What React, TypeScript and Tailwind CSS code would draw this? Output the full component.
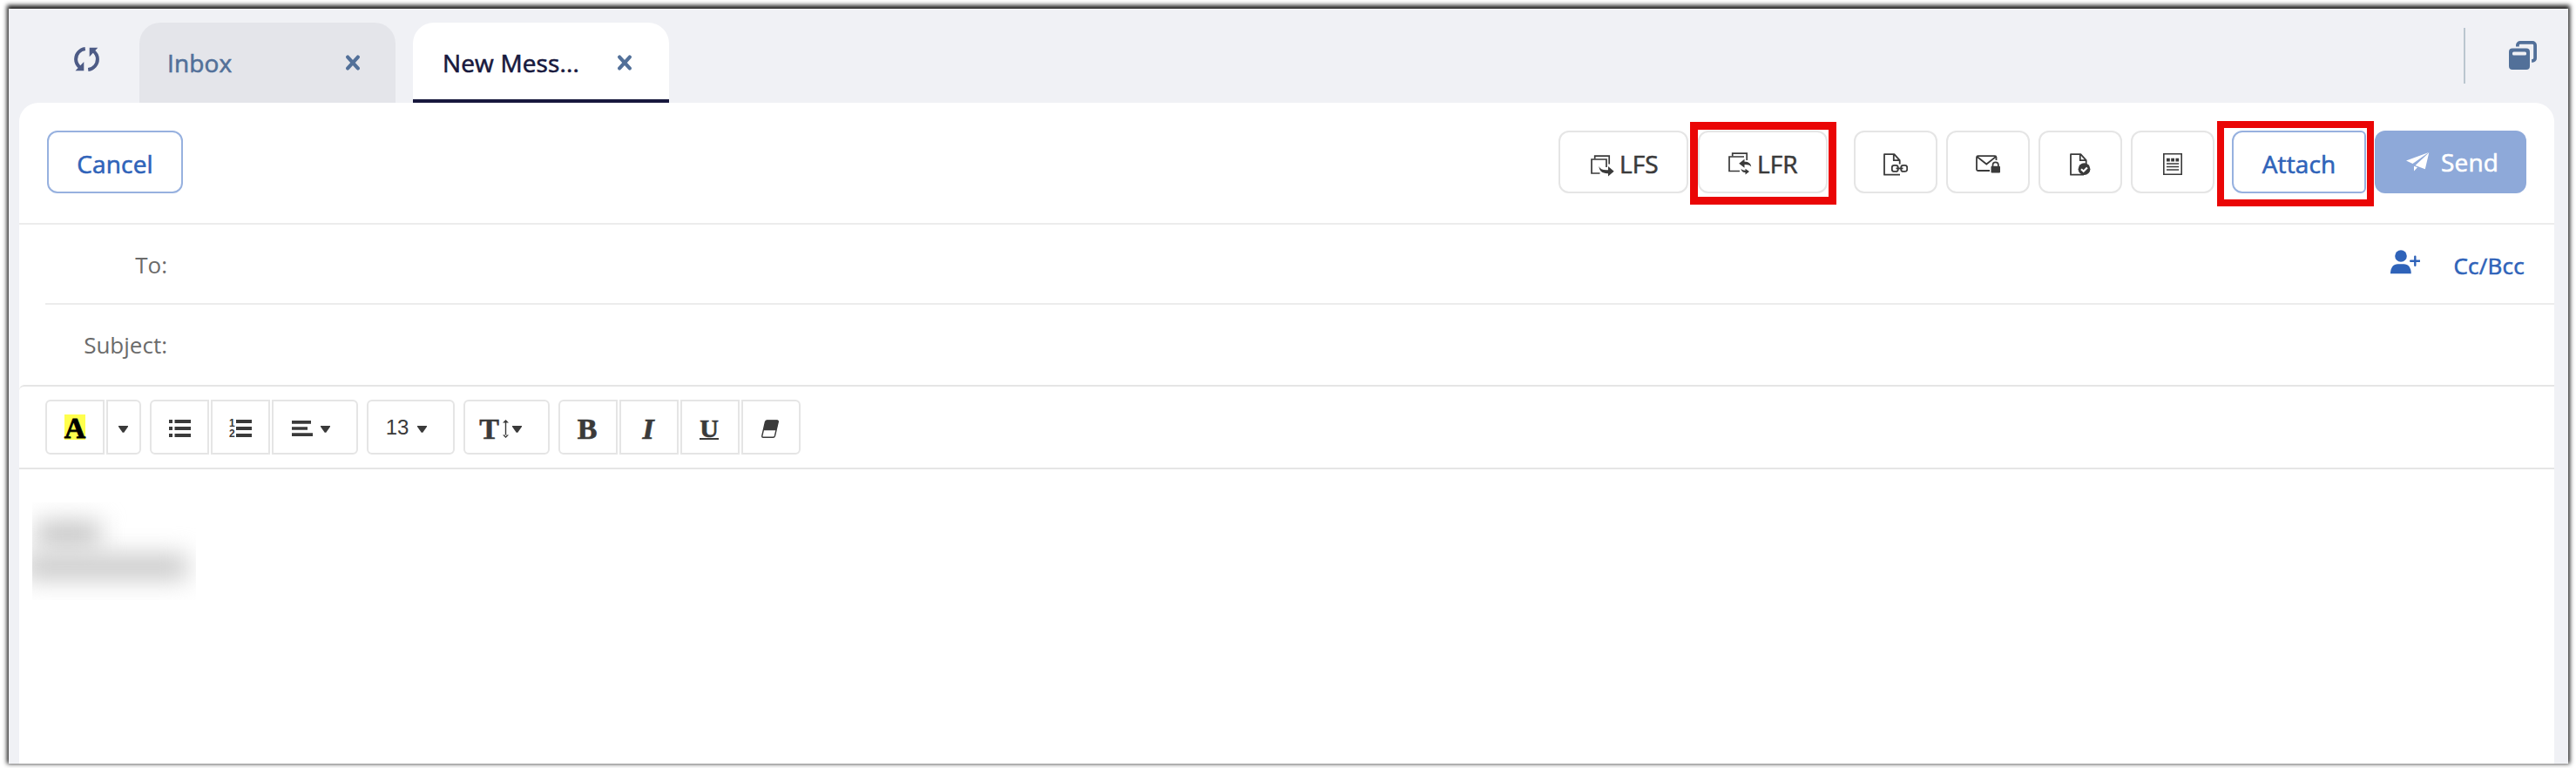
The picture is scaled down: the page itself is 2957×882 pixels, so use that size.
import React from "react";

const iconBtn =
  "flex h-[72px] w-24 shrink-0 items-center justify-center rounded-xl border-2 border-[#e5e5e5] bg-white";
const tool = "flex h-[63px] shrink-0 items-center justify-center border-2 border-[#e5e5e5] bg-white pt-[3px]";
const medium = "text-[28px] font-medium tracking-[0.15px] [-webkit-text-stroke:0.6px_currentColor]";

function Close() {
  return (
    <svg width="16" height="18" viewBox="0 0 16 18" fill="none" stroke="#527099" strokeWidth="4.2" strokeLinecap="round">
      <path d="M2.2 2.6 13.8 15.4M13.8 2.6 2.2 15.4" />
    </svg>
  );
}

function Refresh() {
  return (
    <svg width="29" height="28" viewBox="0 0 29 28">
      <g fill="none" stroke="#4d5b86" strokeWidth="4">
        <path d="M12.8 2C6.600 2.800 2.100 8 2.100 14c0 4 1.800 7.200 5 9.500" />
        <path d="M16.200 26C22.400 25.200 26.900 20 26.900 14c0-4-1.800-7.200-5-9.500" />
      </g>
      <path d="M1.500 27.300h9.800V17z M27.300 .8H17.700V11.200z" fill="#4d5b86" />
    </svg>
  );
}

function Windows() {
  return (
    <svg width="32" height="33" viewBox="0 0 32 33">
      <path d="M9.900 6.500V5a3.100 3.100 0 0 1 3.100-3.100h14A3.100 3.100 0 0 1 30.100 5v14.800a3 3 0 0 1-3 3h-1" fill="none" stroke="#527099" strokeWidth="3.800" />
      <path fillRule="evenodd" fill="#527099" d="M4 8.500h16a4 4 0 0 1 4 4V29a4 4 0 0 1-4 4H4a4 4 0 0 1-4-4V12.500a4 4 0 0 1 4-4zM5.500 12.500a1.500 1.500 0 0 0-1.500 1.500v1a1.500 1.500 0 0 0 1.500 1.500h13a1.500 1.500 0 0 0 1.500-1.500v-1a1.500 1.500 0 0 0-1.500-1.500z" />
    </svg>
  );
}

function ShareIcon() {
  return (
    <svg width="27" height="26" viewBox="0 0 27 26">
      <g fill="none" stroke="#3a3a3a" strokeWidth="1.700">
        <path d="M4.700 4.500V1.200h16.500v9.300" />
        <path d="M18 14V5H1v16h9.500" />
      </g>
      <path d="M9.500 13c1 3 4.500 4.700 10.500 4.200V13l6.700 5.700L20 24.600v-3.400C13.500 21.500 9.500 18 9.500 13z" fill="#3a3a3a" />
    </svg>
  );
}

function ReturnIcon() {
  return (
    <svg width="27" height="26" viewBox="0 0 27 26">
      <g fill="none" stroke="#3a3a3a" strokeWidth="1.700">
        <path d="M4.700 4.500V1.200h16.500V9" />
        <path d="M18 5H1v16.500h12" />
      </g>
      <path d="M12.200 12.800 18.500 7.800v3c4.500 0 7.500 2 7.700 5.700-2-2-4-2.600-7.700-2.400v3.700z M14.500 18.800c1.200 1.400 2.800 2 5 1.900v-2l4.500 3.300-4.500 3.500v-2.400c-2.700.2-4.600-1.500-5-4.300z" fill="#3a3a3a" />
    </svg>
  );
}

function FileLink() {
  return (
    <svg width="28" height="26" viewBox="0 0 28 26" fill="none" stroke="#3a3a3a" strokeWidth="1.800" strokeLinejoin="round">
      <path d="M18.700 12.500V8.200L12.400 1.200H1v23.500h18M11.800 1.200v7h7" />
      <rect x="9.800" y="13.900" width="7" height="7" rx="2.500" />
      <rect x="20.200" y="13.900" width="7" height="7" rx="2.500" />
      <path d="M14.500 17.400h8" />
    </svg>
  );
}

function MailLock() {
  return (
    <svg width="28" height="22" viewBox="0 0 28 22">
      <path d="M23.500 6V2.500A1.500 1.500 0 0 0 22 1.200H2.500A1.500 1.500 0 0 0 1 2.500v14A1.500 1.500 0 0 0 2.500 18H16M1.500 2l10.800 8.500L23 2" fill="none" stroke="#3a3a3a" strokeWidth="1.800" />
      <rect x="17.500" y="12.800" width="10.500" height="7.700" rx="1" fill="#3a3a3a" />
      <path d="M19.500 13.500v-2a3.200 3.200 0 0 1 6.400 0v2" fill="none" stroke="#3a3a3a" strokeWidth="1.700" />
    </svg>
  );
}

function FileCheck() {
  return (
    <svg width="24" height="26" viewBox="0 0 24 26">
      <path d="M18.700 13V8.200L12.400 1.200H1v23.500h15M11.800 1.200v7h7" fill="none" stroke="#3a3a3a" strokeWidth="1.800" strokeLinejoin="round" />
      <circle cx="16.500" cy="18.200" r="6.900" fill="#3a3a3a" />
      <path d="m13 18.200 2.700 2.600 4.200-4.400" fill="none" stroke="#fff" strokeWidth="2.200" />
    </svg>
  );
}

function FormIcon() {
  return (
    <svg width="22" height="25" viewBox="0 0 22 25">
      <path d="M.8.800h20.400v23.400H.8z" fill="none" stroke="#3a3a3a" strokeWidth="1.600" />
      <path d="M4 5.800h3.800v3.700H4zM9.200 5.800H13v3.700H9.200zM14.400 5.800h3.800v3.700h-3.800z" fill="#3a3a3a" />
      <path d="M4 12h14.200M4 15.500h14.200M4 19h14.200" stroke="#3a3a3a" strokeWidth="1.700" />
    </svg>
  );
}

function Plane() {
  return (
    <svg width="27" height="22" viewBox="0 0 27 22" fill="#fff">
      <path d="M26 0 0 9.600 7.500 13zM26.300 .2 10.500 15l11.300 4.300zM9 15.800v5.700l4-4.200z" />
    </svg>
  );
}

function PersonAdd() {
  return (
    <svg width="34" height="28" viewBox="0 0 34 28" fill="#2f63b9">
      <circle cx="12" cy="7" r="6.800" />
      <path d="M0 27.200c0-7 3.500-10.900 8.500-10.900h6.800c5 0 8.500 3.900 8.500 10.900z" />
      <path d="M28.300 7.600v10.200M23.200 12.700h10.200" stroke="#2f63b9" strokeWidth="2.400" strokeLinecap="round" />
    </svg>
  );
}

function Caret() {
  return (
    <svg className="mt-0.5 shrink-0" width="11" height="8" viewBox="0 0 11 8" fill="#3a3a3a">
      <path d="M0 0h11v1L6.300 7.700H4.700L0 1z" />
    </svg>
  );
}

function Bullets() {
  return (
    <svg width="25" height="20" viewBox="0 0 25 20" fill="#3a3a3a">
      <path d="M0 0h4v4H0zM6.500 0H25v4H6.500zM0 8h4v4H0zM6.500 8H25v4H6.500zM0 16h4v4H0zM6.500 16H25v4H6.500z" />
    </svg>
  );
}

function Numbers() {
  return (
    <span className="flex items-center gap-0.5">
      <span className="flex w-1.5 flex-col font-['Liberation_Sans'] text-[12px] leading-[12px] font-bold">
        <span>1</span>
        <span>2</span>
      </span>
      <svg width="18" height="20" viewBox="0 0 18 20" fill="#3a3a3a">
        <path d="M0 0h18v4H0zM0 8h18v4H0zM0 16h18v4H0z" />
      </svg>
    </span>
  );
}

function Align() {
  return (
    <svg width="24" height="18" viewBox="0 0 24 18" fill="#3a3a3a">
      <path d="M0 0h22v3.800H0zM0 7.200h18v3.600H0zM0 14.200h24V18H0z" />
    </svg>
  );
}

function UpDown() {
  return (
    <svg className="shrink-0" width="7" height="21" viewBox="0 0 7 21" fill="#3a3a3a">
      <path d="M3.500 0 7 3.500H0zM3.500 21 7 17.500H0zM2.800 2h1.400v17H2.800z" />
    </svg>
  );
}

function Eraser() {
  return (
    <svg width="20" height="21" viewBox="0 0 20 21">
      <path d="M6.500 1h11.500q1.500 0 1.200 1.500L15.500 18.500Q15 20.200 13.500 20.200H2Q.4 20.200.8 18.500L4.500 2.500Q5 1 6.500 1z" fill="#fff" stroke="#3a3a3a" strokeWidth="1.400" />
      <path d="M6.500 .5h11.500q1.800 0 1.400 2L17 12.300H2.400L4.500 2.500Q5 .5 6.500 .5z" fill="#3a3a3a" />
    </svg>
  );
}

export default function App() {
  return (
    <div className="h-[882px] w-[2957px] overflow-hidden bg-white pt-2.5 pl-2.5 font-['Open_Sans','Noto_Sans',sans-serif] text-[#3a3a3a]">
      <div className="flex h-[867px] w-[2938px] flex-col bg-[#f0f1f5] shadow-[0_-2px_5px_2px_rgba(0,0,0,0.88)]">
        <header className="flex h-[108px] shrink-0 items-end">
          <div className="mb-9 ml-[75px] flex w-[75px]">
            <Refresh />
          </div>
          <div className={medium + " flex h-[92px] w-[294px] items-center justify-between rounded-t-3xl bg-[#e4e5ea] pr-[41px] pl-8 text-[#527099]"}>
            <span>Inbox</span>
            <Close />
          </div>
          <div className={medium + " ml-5 flex h-[92px] w-[294px] items-center justify-between rounded-t-3xl border-b-4 border-[#17183d] bg-white pt-[3px] pr-[43px] pl-[34px] text-[#17183d]"}>
            <span>New Mess...</span>
            <Close />
          </div>
          <div className="mb-[22px] ml-auto h-16 w-0.5 bg-[#bac6cf]" />
          <div className="mr-9 mb-[38px] ml-[50px]">
            <Windows />
          </div>
        </header>

        <main className="mr-4 ml-3 flex min-h-0 grow flex-col rounded-t-[22px] bg-white">
          <div className="flex h-[140px] shrink-0 items-start border-b-2 border-[#ececec] pt-8 pl-8">
            <button className={medium + " flex h-[72px] w-[156px] items-center justify-center rounded-xl border-2 border-[#97b1df] pt-[3px] text-[#2f63b9]"}>
              Cancel
            </button>
            <div className="mr-8 ml-auto flex">
              <button className={medium + " flex h-[72px] w-[149px] items-center rounded-xl border-2 border-[#e5e5e5] pt-[3px] pl-[35px]"}>
                <span className="mr-[6px] pt-1.5"><ShareIcon /></span>LFS
              </button>
              <div className="-mt-2.5 ml-0.5 flex h-[95px] w-[168px] border-[9px] border-[#ea0606] pt-px">
                <button className={medium + " flex h-[72px] w-[149px] items-center rounded-xl border-2 border-[#e5e5e5] pt-[3px] pl-[33px]"}>
                  <span className="mr-[6px]"><ReturnIcon /></span>LFR
                </button>
              </div>
              <div className="ml-5 flex gap-2.5 pb-[23px]">
                <button className={iconBtn + " pt-[5px]"}><FileLink /></button>
                <button className={iconBtn + " pt-[5px]"}><MailLock /></button>
                <button className={iconBtn + " pt-[5px]"}><FileCheck /></button>
                <button className={iconBtn + " pt-[5px]"}><FormIcon /></button>
              </div>
              <div className="-mt-[11px] ml-[3px] flex h-[98px] w-[180px] border-8 border-[#ea0606] pt-[3px] pl-[9px]">
                <button className={medium + " flex h-[72px] w-[154px] items-center justify-center rounded-l-xl rounded-r-md border-2 border-[#97b1df] pt-[3px] text-[#2f63b9]"}>
                  Attach
                </button>
              </div>
              <button className={medium + " ml-px flex h-[72px] w-[174px] items-center rounded-xl bg-[#8ea9d9] pb-px pl-9 text-white"}>
                <Plane />
                <span className="ml-[13px]">Send</span>
              </button>
            </div>
          </div>

          <div className="ml-[30px] flex h-[92px] shrink-0 items-center border-b-2 border-[#ececec] pr-[34px] text-[26px]">
            <span className="w-[140px] pt-[3px] text-right text-[#6b6b6b]">To:</span>
            <span className="mr-[38px] mb-1 ml-auto"><PersonAdd /></span>
            <span className="pt-1 font-medium tracking-[0.25px] text-[#2f63b9] [-webkit-text-stroke:0.6px_currentColor]">Cc/Bcc</span>
          </div>
          <div className="ml-[30px] flex h-[92px] shrink-0 items-center text-[26px] text-[#6b6b6b]">
            <span className="w-[140px] pt-px text-right">Subject:</span>
          </div>

          <div className="flex h-[97px] shrink-0 items-start gap-2.5 rounded-tl-md border-y-2 border-[#e5e5e5] pt-[15px] pl-[30px]">
            <div className="flex gap-0.5">
              <button className={tool + " w-[68px] rounded-l-md"}>
                <span className="-mt-1 flex h-[29px] w-6 items-center justify-center bg-[#ffff4d] pt-1 font-['Liberation_Serif'] text-[34px] leading-none font-bold text-black [-webkit-text-stroke:0.8px_currentColor]">A</span>
              </button>
              <button className={tool + " w-10 rounded-r-md pr-px"}><Caret /></button>
            </div>
            <div className="flex gap-0.5">
              <button className={tool + " w-[68px] rounded-l-md"}><Bullets /></button>
              <button className={tool + " w-[68px]"}><Numbers /></button>
              <button className={tool + " w-[99px] gap-[9px] rounded-r-md pr-2.5"}><Align /><Caret /></button>
            </div>
            <button className={tool + " w-[101px] gap-2.5 rounded-md pr-2.5 font-['Liberation_Sans'] text-[24px]"}>
              <span className="pb-[3px]">13</span><Caret />
            </button>
            <button className={tool + " w-[99px] gap-1 rounded-md pr-3.5 font-['Liberation_Serif'] text-[34px] font-bold"}>
              <span className="[-webkit-text-stroke:0.6px_currentColor]">T</span><UpDown /><Caret />
            </button>
            <div className="flex gap-0.5 font-['Liberation_Serif'] text-[34px] font-bold [-webkit-text-stroke:0.7px_currentColor]">
              <button className={tool + " w-[68px] rounded-l-md pr-0.5"}>B</button>
              <button className={tool + " w-[68px] pr-0.5 italic"}>I</button>
              <button className={tool + " w-[68px] pr-0.5"}>
                <span className="border-b-2 border-[#3a3a3a] text-[30px] leading-[23px]">U</span>
              </button>
              <button className={tool + " w-[68px] rounded-r-md pr-0.5"}><Eraser /></button>
            </div>
          </div>

          <div className="mt-[38px] ml-[15px] h-[112px] w-[188px] overflow-hidden">
            <div className="mt-[22px] ml-1 h-7 w-[74px] bg-[#c3c3c3] blur-[14px]" />
            <div className="mt-2.5 -ml-2.5 h-7 w-[188px] bg-[#c6c6c6] blur-[14px]" />
          </div>
        </main>
      </div>
    </div>
  );
}
